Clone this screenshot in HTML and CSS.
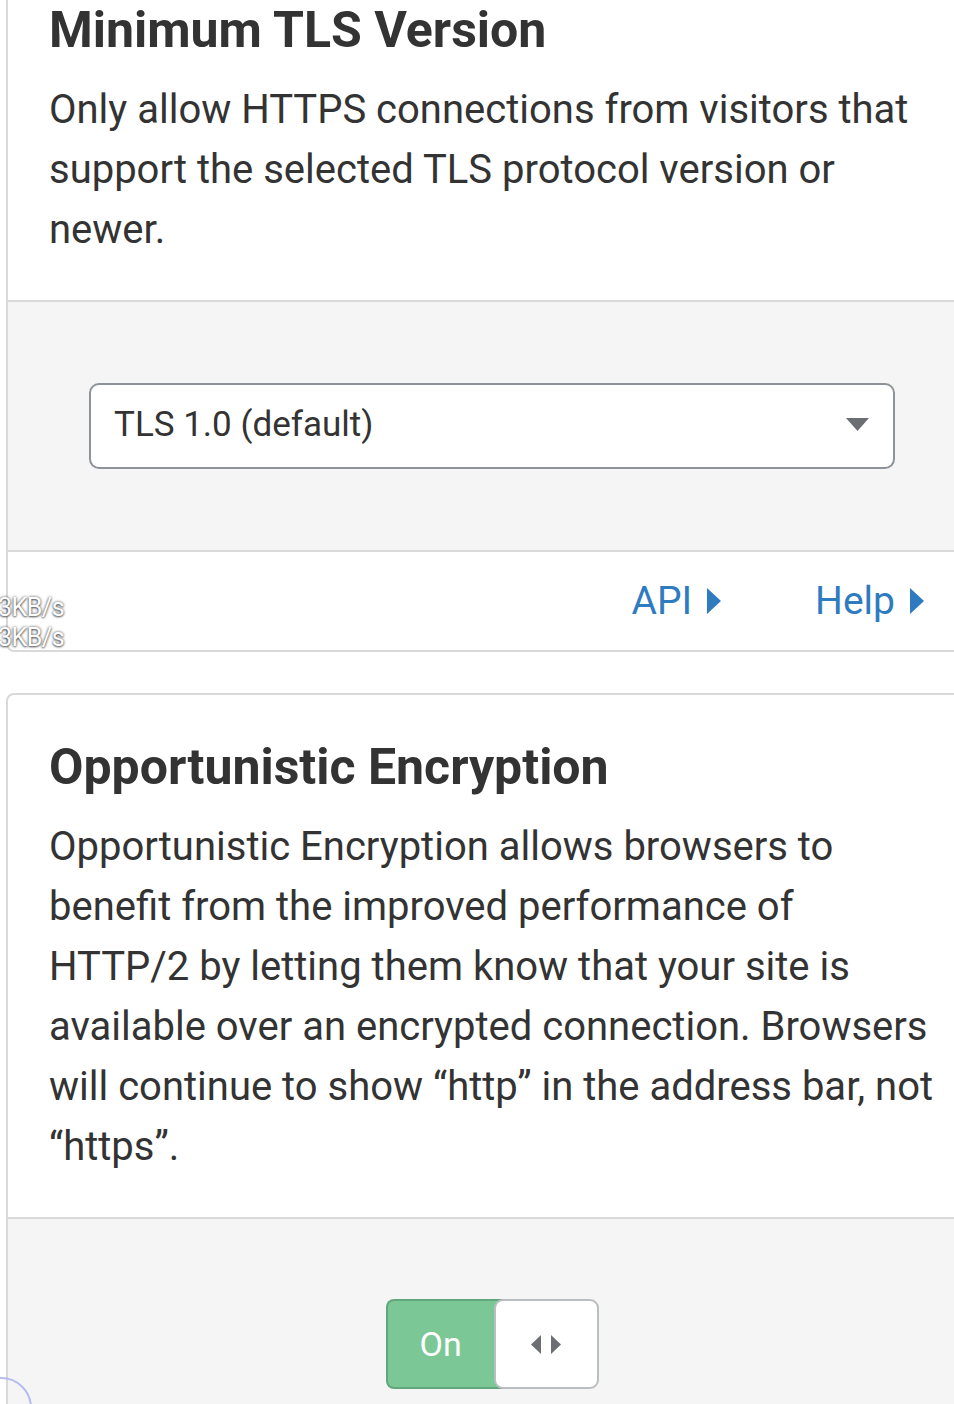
FILE: index.html
```html
<!DOCTYPE html>
<html lang="en">
<head>
<meta charset="utf-8">
<title>SSL/TLS settings</title>
<link rel="stylesheet" href="styles.css">
</head>
<body>
<div class="page">
  <section class="card">
    <div class="card-body">
      <h2 class="card-title">Minimum TLS Version</h2>
      <p class="card-text">Only allow HTTPS connections from visitors that support the selected TLS protocol version or newer.</p>
    </div>
    <div class="card-control">
      <div class="select">
        <span class="select-value">TLS 1.0 (default)</span>
        <svg class="select-arrow" width="23" height="13" viewBox="0 0 23 13"><path d="M0 0H23L11.5 13Z" fill="#6b6f74"/></svg>
      </div>
    </div>
    <div class="card-footer">
      <a class="link" href="#">API<svg class="caret" width="14" height="26" viewBox="0 0 14 26"><path d="M0 0L14 13L0 26Z" fill="#2f7bbf"/></svg></a>
      <a class="link" href="#">Help<svg class="caret" width="14" height="26" viewBox="0 0 14 26"><path d="M0 0L14 13L0 26Z" fill="#2f7bbf"/></svg></a>
    </div>
  </section>

  <section class="card">
    <div class="card-body">
      <h2 class="card-title">Opportunistic Encryption</h2>
      <p class="card-text">Opportunistic Encryption allows browsers to benefit from the improved performance of HTTP/2 by letting them know that your site is available over an encrypted connection. Browsers will continue to show “http” in the address bar, not “https”.</p>
    </div>
    <div class="card-control card-control--toggle">
      <div class="toggle">
        <span class="toggle-on">On</span>
        <span class="toggle-knob">
          <svg width="30" height="19" viewBox="0 0 30 19"><path d="M10 0V19L0 9.5Z" fill="#6b6f74"/><path d="M20 0V19L30 9.5Z" fill="#6b6f74"/></svg>
        </span>
      </div>
    </div>
  </section>
</div>

<div class="speed">
  <div>3KB/s</div>
  <div>3KB/s</div>
</div>
<div class="touch-ring"></div>
</body>
</html>
```

FILE: styles.css
```css
html, body {
  margin: 0;
  padding: 0;
  overflow: hidden;
  background: #fff;
}

body {
  font-family: Roboto, "Noto Sans", "Liberation Sans", sans-serif;
  color: #333;
  width: 954px;
  height: 1404px;
  position: relative;
}

.page {
  margin-top: -44px;
  padding-left: 6px;
}

.card {
  width: 968px;
  border: 2px solid #d9d9d9;
  border-radius: 8px;
  background: #fff;
  margin-bottom: 41px;
}

.card-body {
  padding: 42px 41px 40px 41px;
}

.card-title {
  margin: 0 0 20px;
  font-size: 50px;
  line-height: 60px;
  font-weight: 700;
  color: #333;
}

.card-text {
  margin: 0;
  font-size: 40px;
  line-height: 60px;
  color: #333;
}

.card-control {
  border-top: 2px solid #d9d9d9;
  background: #f5f5f5;
  padding: 81px 81px;
  display: flex;
  justify-content: center;
}

.card-control--toggle {
  padding-top: 80px;
}

.select {
  box-sizing: border-box;
  width: 806px;
  height: 86px;
  border: 2px solid #8e9399;
  border-radius: 10px;
  background: #fff;
  display: flex;
  align-items: center;
  justify-content: space-between;
  padding: 0 24px 0 23px;
}

.select-value {
  font-size: 35px;
  color: #333;
  margin-top: -4px;
}

.select-arrow {
  margin-top: -4px;
}

.card-footer {
  border-top: 2px solid #d9d9d9;
  height: 98px;
  display: flex;
  align-items: center;
  justify-content: flex-end;
  gap: 94px;
  padding-right: 52px;
}

.link {
  display: flex;
  align-items: center;
  gap: 15px;
  font-size: 39px;
  color: #2f7bbf;
  text-decoration: none;
}

.toggle {
  display: flex;
  height: 90px;
}

.toggle-on {
  box-sizing: border-box;
  width: 118px;
  height: 90px;
  background: #7cc796;
  border: 2px solid #62a77b;
  border-radius: 8px 0 0 8px;
  border-right: none;
  color: #fff;
  font-size: 34px;
  display: flex;
  align-items: center;
  padding-left: 32px;
}

.toggle-knob {
  box-sizing: border-box;
  width: 105px;
  height: 90px;
  margin-left: -10px;
  background: #fff;
  border: 2px solid #b9bec0;
  border-radius: 9px;
  display: flex;
  align-items: center;
  justify-content: center;
}

.speed {
  position: absolute;
  left: -2px;
  top: 593px;
  font-size: 25px;
  line-height: 30px;
  color: #fff;
  text-shadow: 0 0 3px rgba(0, 0, 0, 0.7), 0 1px 2px rgba(0, 0, 0, 0.5);
  letter-spacing: -0.5px;
}

.touch-ring {
  position: absolute;
  left: -30px;
  top: 1377px;
  width: 58px;
  height: 58px;
  border: 2px solid #b5bdf0;
  border-radius: 50%;
}
```
